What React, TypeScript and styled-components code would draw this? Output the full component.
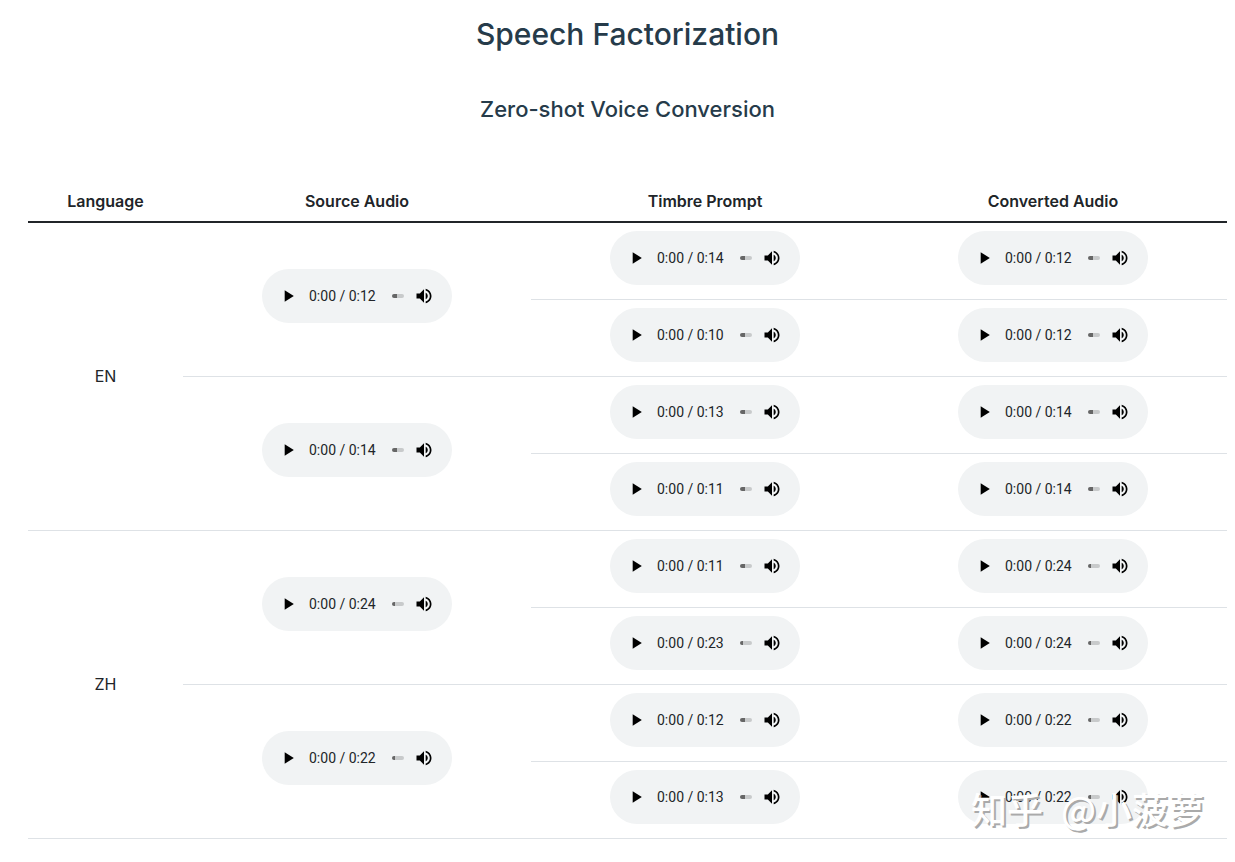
import React from "react";
import styled, { createGlobalStyle } from "styled-components";

const GlobalStyle = createGlobalStyle`
  *, *::before, *::after { box-sizing: border-box; }
  body {
    margin: 0;
    background: #fff;
    color: #212529;
    font-family: Inter, "Noto Sans CJK SC", sans-serif;
    font-size: 16px;
    line-height: 24px;
  }
`;

const Page = styled.main`
  position: relative;
  padding: 14px 8px 22px 28px;
`;

const Title = styled.h1`
  margin: 0 0 40px;
  color: #263b4a;
  font-size: 30px;
  font-weight: 500;
  line-height: 40px;
  text-align: center;
`;

const Subtitle = styled.h2`
  margin: 0 0 57px;
  color: #263b4a;
  font-size: 22px;
  font-weight: 500;
  line-height: 30px;
  text-align: center;
`;

const Table = styled.table`
  width: 100%;
  table-layout: fixed;
  border-collapse: collapse;
  text-align: center;
`;

const HeadCell = styled.th<{ $narrow?: boolean }>`
  width: ${(p) => (p.$narrow ? "155px" : "auto")};
  padding: 8px;
  border-bottom: 2px solid #212529;
  font-weight: 600;
`;

const Cell = styled.td`
  padding: 8px 8px 10px;
  border-bottom: 1px solid #dee2e6;
  vertical-align: middle;
`;

const SourceCell = styled(Cell)`
  padding-bottom: 16px;
`;

const AudioCell = styled(Cell)`
  padding-bottom: 14px;
`;

const Player = styled.div`
  display: flex;
  align-items: center;
  width: 190px;
  height: 54px;
  margin: 0 auto;
  padding: 0 18px 0 16px;
  border-radius: 27px;
  background: #f1f3f4;
`;

const IconButton = styled.button`
  display: flex;
  flex: none;
  padding: 0;
  border: 0;
  background: none;
  color: #000;
  cursor: pointer;
`;

const Time = styled.span`
  flex: 1;
  padding-left: 11px;
  font-family: Roboto, sans-serif;
  font-size: 14px;
  line-height: 20px;
  text-align: left;
  white-space: nowrap;
`;

const Timeline = styled.input<{ $buffered: number }>`
  appearance: none;
  flex: none;
  width: 12px;
  height: 4px;
  margin: 0 10px 0 0;
  border-radius: 2px;
  background: linear-gradient(to right, #666 ${(p) => p.$buffered}px, #c8cacb ${(p) => p.$buffered}px);
  &::-webkit-slider-thumb {
    appearance: none;
    width: 0;
    height: 0;
  }
`;

const Watermark = styled.div`
  position: absolute;
  right: 31px;
  bottom: 28px;
  display: flex;
  gap: 18px;
  color: #fff;
  font-family: "Noto Sans CJK SC", sans-serif;
  font-size: 36px;
  font-weight: 500;
  line-height: 50px;
  white-space: nowrap;
  text-shadow: 2px 2px 0 #aaa;
  pointer-events: none;
`;

function AudioPlayer({ seconds, label }: { seconds: number; label: string }) {
  return (
    <Player role="group" aria-label={label}>
      <IconButton type="button" aria-label="Play">
        <svg width="20" height="20" viewBox="0 0 24 24" fill="currentColor">
          <path d="M8 5v14l11-7z" />
        </svg>
      </IconButton>
      <Time>0:00 / 0:{seconds}</Time>
      <Timeline
        type="range"
        aria-label="Seek"
        min={0}
        max={seconds}
        defaultValue={0}
        $buffered={seconds > 20 ? 3 : 5}
      />
      <IconButton type="button" aria-label="Mute">
        <svg width="20" height="20" viewBox="0 0 24 24" fill="currentColor">
          <path d="M3 9v6h4l5 5V4L7 9H3zm13.5 3c0-1.77-1.02-3.29-2.5-4.03v8.05c1.48-.73 2.5-2.25 2.5-4.02zM14 3.23v2.06c2.89.86 5 3.54 5 6.71s-2.11 5.85-5 6.71v2.06c4.01-.91 7-4.49 7-8.77s-2.99-7.86-7-8.77z" />
        </svg>
      </IconButton>
    </Player>
  );
}

type Sample = { language?: string; source?: number; timbre: number; converted: number };

const samples: Sample[] = [
  { language: "EN", source: 12, timbre: 14, converted: 12 },
  { timbre: 10, converted: 12 },
  { source: 14, timbre: 13, converted: 14 },
  { timbre: 11, converted: 14 },
  { language: "ZH", source: 24, timbre: 11, converted: 24 },
  { timbre: 23, converted: 24 },
  { source: 22, timbre: 12, converted: 22 },
  { timbre: 13, converted: 22 },
];

export default function App() {
  return (
    <>
      <GlobalStyle />
      <Page>
        <Title>Speech Factorization</Title>
        <Subtitle>Zero-shot Voice Conversion</Subtitle>
        <Table>
          <thead>
            <tr>
              <HeadCell scope="col" $narrow>Language</HeadCell>
              <HeadCell scope="col">Source Audio</HeadCell>
              <HeadCell scope="col">Timbre Prompt</HeadCell>
              <HeadCell scope="col">Converted Audio</HeadCell>
            </tr>
          </thead>
          <tbody>
            {samples.map((s, i) => (
              <tr key={i}>
                {s.language && <Cell rowSpan={4}>{s.language}</Cell>}
                {s.source && (
                  <SourceCell rowSpan={2}>
                    <AudioPlayer seconds={s.source} label="Source audio" />
                  </SourceCell>
                )}
                <AudioCell>
                  <AudioPlayer seconds={s.timbre} label="Timbre prompt" />
                </AudioCell>
                <AudioCell>
                  <AudioPlayer seconds={s.converted} label="Converted audio" />
                </AudioCell>
              </tr>
            ))}
          </tbody>
        </Table>
        <Watermark>
          <span>知乎</span>
          <span>@小菠萝</span>
        </Watermark>
      </Page>
    </>
  );
}
